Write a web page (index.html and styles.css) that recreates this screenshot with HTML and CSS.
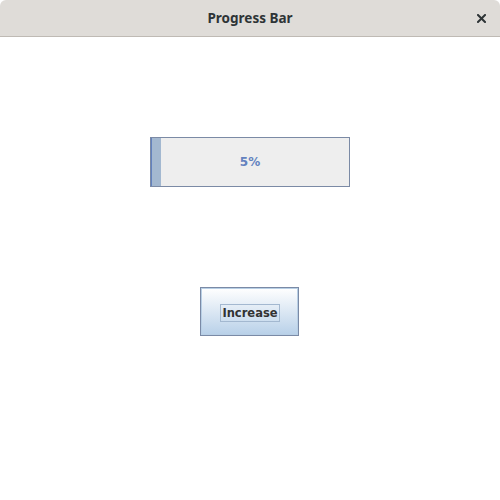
FILE: index.html
```html
<!DOCTYPE html>
<html>
<head>
<meta charset="utf-8">
<link rel="stylesheet" href="styles.css">
</head>
<body>
<div class="window">
  <div class="titlebar">
    <span class="title">Progress Bar</span>
    <span class="close">
      <svg width="9" height="9" viewBox="0 0 9 9"><path d="M1 1L8 8M8 1L1 8" stroke="#2e3436" stroke-width="2" stroke-linecap="square"/></svg>
    </span>
  </div>
  <div class="content">
    <div class="progress">
      <div class="fill" style="width:5%"></div>
      <span class="ptext">5%</span>
    </div>
    <button class="btn"><span class="focus">Increase</span></button>
  </div>
</div>
</body>
</html>
```
FILE: styles.css
```css
html, body {
  margin: 0;
  padding: 0;
  background: #ffffff;
}
.window {
  width: 500px;
  height: 500px;
  display: flex;
  flex-direction: column;
  background: #ffffff;
}
.titlebar {
  height: 36px;
  flex: none;
  background: #dfdcd8;
  border-bottom: 1px solid #bfbab4;
  border-radius: 6px 6px 0 0;
  display: flex;
  align-items: center;
  justify-content: center;
  position: relative;
}
.title {
  font-family: "Noto Sans", "DejaVu Sans", sans-serif;
  font-weight: 700;
  font-size: 13.5px;
  color: #2e3436;
}
.close {
  position: absolute;
  right: 14px;
  top: 14px;
  width: 9px;
  height: 9px;
  display: flex;
}
.content {
  display: flex;
  flex-direction: column;
  align-items: center;
  padding-top: 100px;
  gap: 100px;
}
.progress {
  box-sizing: border-box;
  width: 200px;
  height: 50px;
  border: 1px solid #7b8aa5;
  background: #eeeeee;
  position: relative;
  display: flex;
  align-items: center;
  justify-content: center;
}
.fill {
  position: absolute;
  left: 0;
  top: 0;
  bottom: 0;
  background: #a3b8d0;
  border-left: 1px solid #6382bf;
  box-sizing: border-box;
}
.ptext {
  position: relative;
  font-family: "DejaVu Sans", sans-serif;
  font-weight: 700;
  font-size: 12px;
  color: #6382bf;
}
.btn {
  box-sizing: border-box;
  width: 99px;
  height: 49px;
  margin: 0 1px 0 0;
  padding: 2px 0 0 1px;
  border: 1px solid #7a8aa6;
  box-shadow: inset 0 0 0 1px #b8cfe5;
  background: linear-gradient(to bottom, #ffffff 0%, #b8d0e8 100%);
  display: flex;
  align-items: center;
  justify-content: center;
}
.focus {
  font-family: "DejaVu Sans", sans-serif;
  font-weight: 700;
  font-size: 11.5px;
  color: #333333;
  border: 1px solid #a3b8d0;
  padding: 1px 1px;
  line-height: 14px;
}
```
